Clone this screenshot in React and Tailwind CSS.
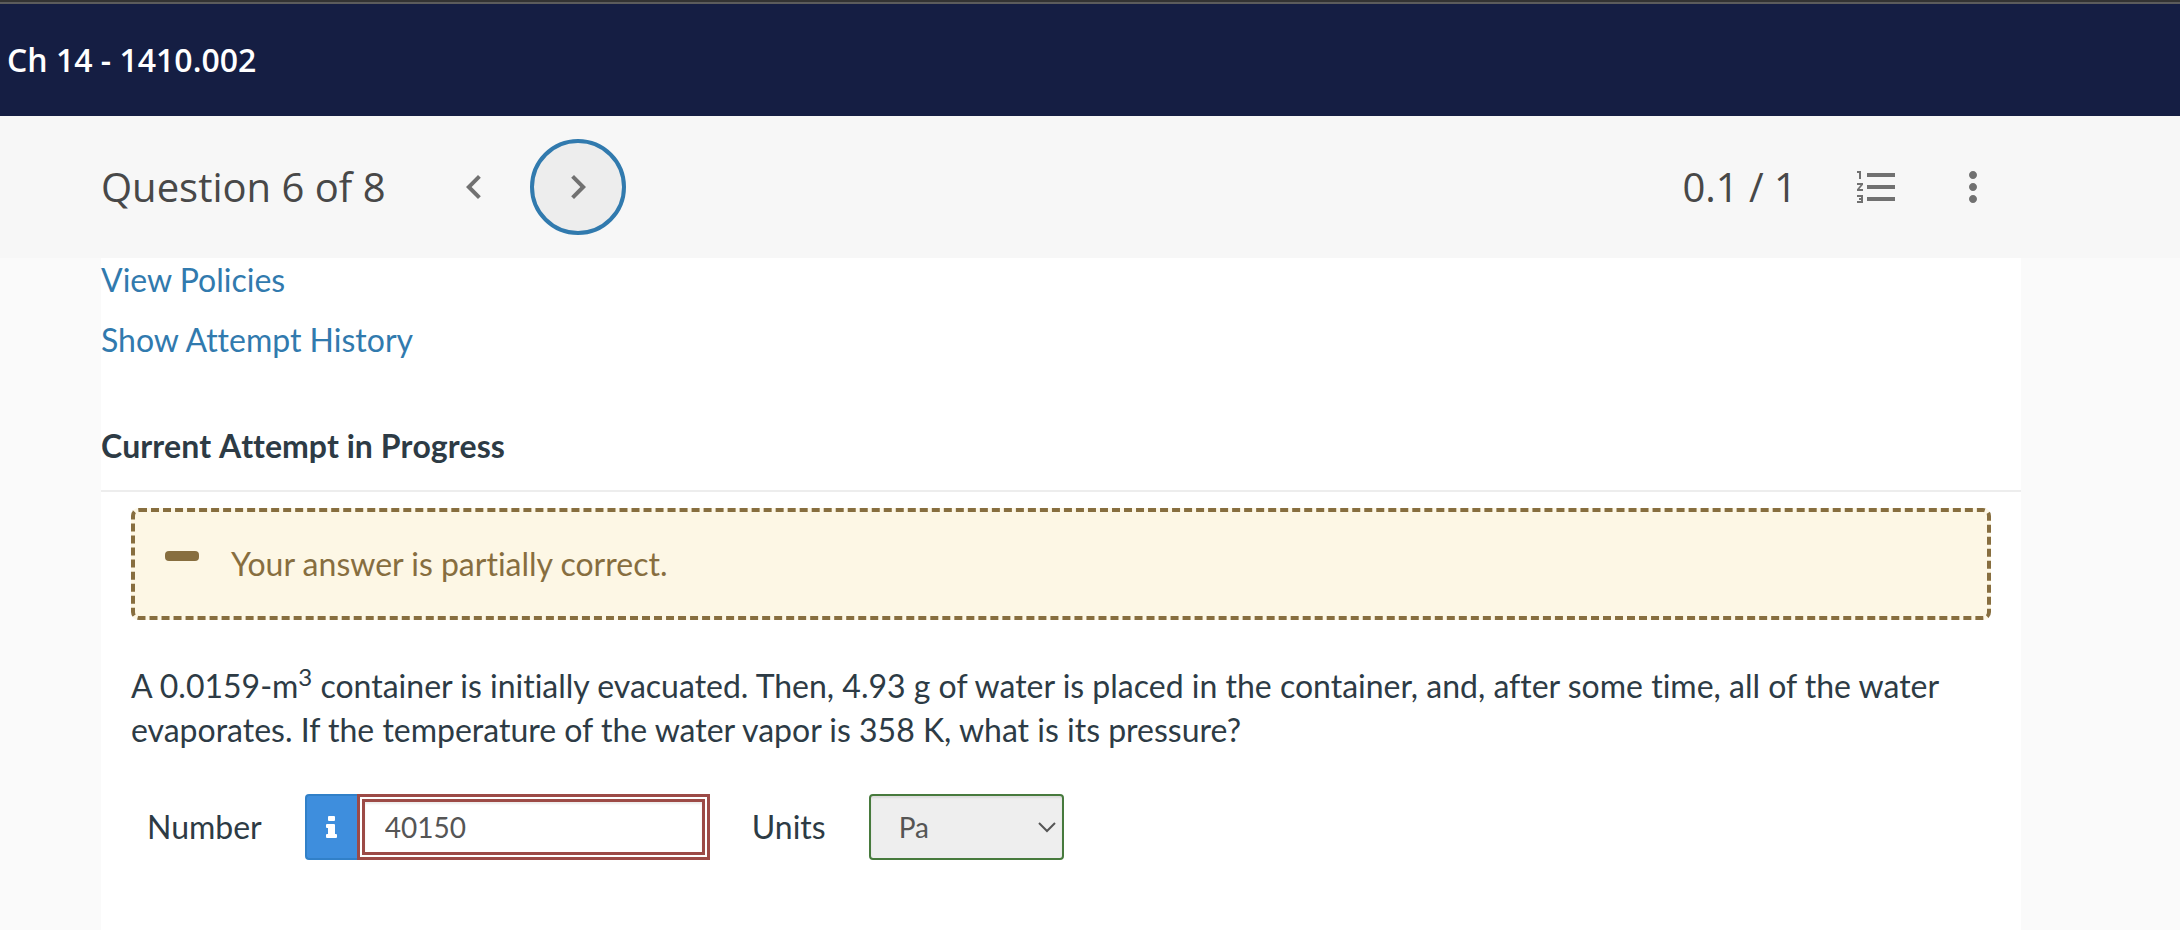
import { useState } from "react";
import {
  MdChevronLeft,
  MdChevronRight,
  MdFormatListNumbered,
  MdMoreVert,
} from "react-icons/md";

function IconButton({ label, focused, children }) {
  return (
    <button
      type="button"
      aria-label={label}
      className={
        focused
          ? "flex size-24 items-center justify-center rounded-full border-4 border-[#317aae] bg-[#ededed] text-[#717171]"
          : "flex size-24 items-center justify-center rounded-full text-[#717171]"
      }
    >
      {children}
    </button>
  );
}

function InfoIcon() {
  return (
    <svg width="12" height="22" viewBox="0 0 12 22" fill="currentColor" aria-hidden="true">
      <rect x="2" y="0" width="7" height="5" rx="1" />
      <path d="M1 8h7a1 1 0 0 1 1 1v9h1a1 1 0 0 1 1 1v2a1 1 0 0 1-1 1H1a1 1 0 0 1-1-1v-2a1 1 0 0 1 1-1h1v-6H1a1 1 0 0 1-1-1V9a1 1 0 0 1 1-1z" />
    </svg>
  );
}

function Toolbar() {
  return (
    <div className="bg-[#f7f7f7] font-['Open_Sans',sans-serif] text-[40px] leading-[56px] text-[#484848]">
      <div className="mr-[159px] ml-[101px] flex h-[142px] items-center">
        <h2 className="mr-10">Question 6 of 8</h2>
        <div className="flex gap-2">
          <IconButton label="Previous question">
            <MdChevronLeft size={48} />
          </IconButton>
          <IconButton label="Next question" focused>
            <MdChevronRight size={48} />
          </IconButton>
        </div>
        <span className="mr-8 ml-auto">0.1 / 1</span>
        <IconButton label="Question list">
          <MdFormatListNumbered size={48} />
        </IconButton>
        <IconButton label="More options">
          <MdMoreVert size={48} />
        </IconButton>
      </div>
    </div>
  );
}

function AnswerForm() {
  const [answer, setAnswer] = useState("40150");
  const [units, setUnits] = useState("Pa");

  return (
    <form
      onSubmit={(e) => e.preventDefault()}
      className="mt-[42px] flex items-center pl-4"
    >
      <label htmlFor="answer">Number</label>
      <div className="ml-[43px] flex h-[66px]">
        <button
          type="button"
          aria-label="Number format help"
          className="flex w-[52px] items-center justify-center rounded-l border-2 border-r-0 border-[#3180c8] bg-[#3e8edd] text-white"
        >
          <InfoIcon />
        </button>
        <input
          id="answer"
          type="text"
          value={answer}
          onChange={(e) => setAnswer(e.target.value)}
          className="w-[353px] border-8 border-double border-[#9c4a46] bg-white px-5 text-[28px] text-[#555555] shadow-[inset_0_2px_2px_rgba(0,0,0,0.08)]"
        />
      </div>
      <label htmlFor="units" className="ml-[42px]">
        Units
      </label>
      <div className="relative ml-[43px]">
        <select
          id="units"
          value={units}
          onChange={(e) => setUnits(e.target.value)}
          className="h-[66px] w-[195px] appearance-none rounded border-2 border-[#477a3d] bg-[#eeeeee] px-7 text-[28px] text-[#555555] shadow-[inset_0_2px_2px_rgba(0,0,0,0.08)]"
        >
          <option>Pa</option>
          <option>atm</option>
          <option>N</option>
        </select>
        <svg
          className="pointer-events-none absolute top-7 right-2"
          width="18"
          height="11"
          viewBox="0 0 18 11"
          fill="none"
          stroke="#555555"
          strokeWidth="2"
          aria-hidden="true"
        >
          <path d="M1 1l8 8 8-8" />
        </svg>
      </div>
    </form>
  );
}

export default function App() {
  return (
    <div className="flex min-h-screen flex-col bg-[#fafafa]">
      <header className="border-t-2 border-[#333333]">
        <div className="flex h-[114px] items-center border-t-2 border-[#5c5c5c] bg-[#151e43] pl-[7px]">
          <h1 className="font-['Open_Sans',sans-serif] text-[32px] leading-[44px] font-semibold text-white">
            Ch 14 - 1410.002
          </h1>
        </div>
      </header>

      <Toolbar />

      <main className="mr-[159px] ml-[101px] grow bg-white font-['Lato',sans-serif] text-[32px] leading-[44px] text-[#2d3b45] [font-variant-ligatures:none]">
        <nav className="flex flex-col items-start gap-4 text-[#317aae]">
          <a href="#policies">View Policies</a>
          <a href="#history">Show Attempt History</a>
        </nav>

        <h3 className="mt-[62px] border-b-2 border-[#ededed] pb-[22px] font-bold [font-kerning:none]">
          Current Attempt in Progress
        </h3>

        <div className="px-[30px] pt-4">
          <div
            role="status"
            className="flex rounded-lg border-4 border-dashed border-[#876e3f] bg-[#fdf7e5] px-[30px] py-[30px] text-[#876e3f]"
          >
            <span className="mt-[9px] mr-8 h-[10px] w-[34px] rounded-sm bg-[#876e3f]" />
            <p>Your answer is partially correct.</p>
          </div>

          <p className="mt-11 [text-rendering:optimizeLegibility]">
            A 0.0159-m<sup className="text-[24px]">3</sup> container is
            initially evacuated. Then, 4.93 g of water is placed in the
            container, and, after some time, all of the water evaporates. If the
            temperature of the water vapor is 358 K, what is its pressure?
          </p>

          <AnswerForm />
        </div>
      </main>
    </div>
  );
}
